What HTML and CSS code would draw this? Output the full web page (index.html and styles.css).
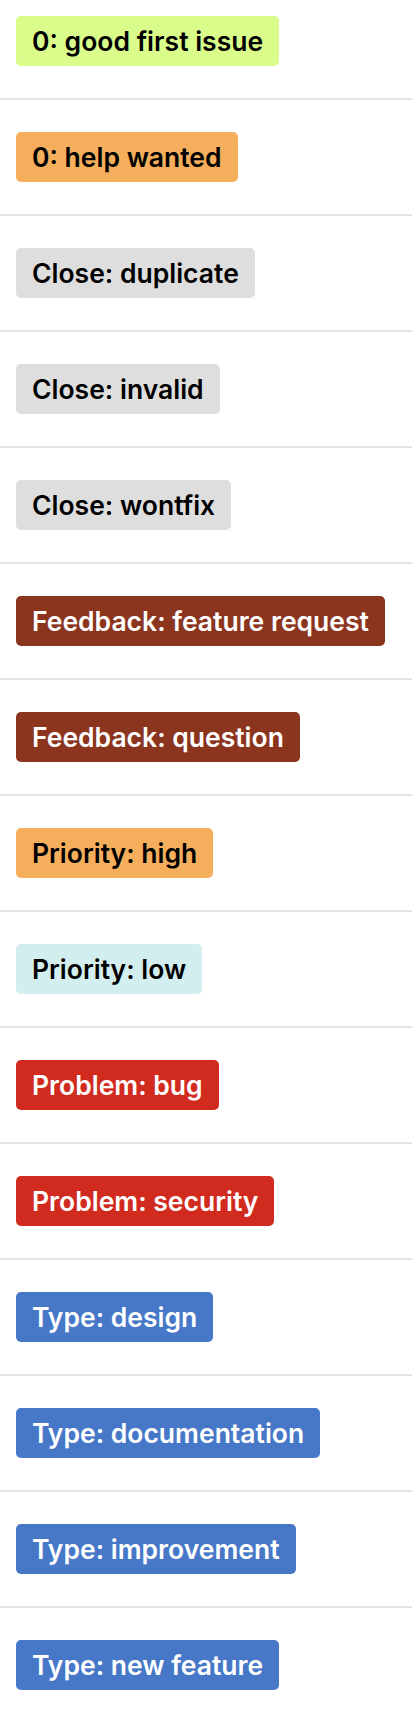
FILE: index.html
```html
<!DOCTYPE html>
<html lang="en">
<head>
<meta charset="utf-8">
<title>Labels</title>
<link rel="stylesheet" href="styles.css">
</head>
<body>
<ul class="labels">
  <li class="row"><span class="badge green">0: good first issue</span></li>
  <li class="row"><span class="badge orange">0: help wanted</span></li>
  <li class="row"><span class="badge gray">Close: duplicate</span></li>
  <li class="row"><span class="badge gray">Close: invalid</span></li>
  <li class="row"><span class="badge gray">Close: wontfix</span></li>
  <li class="row"><span class="badge brown">Feedback: feature request</span></li>
  <li class="row"><span class="badge brown">Feedback: question</span></li>
  <li class="row"><span class="badge orange">Priority: high</span></li>
  <li class="row"><span class="badge cyan">Priority: low</span></li>
  <li class="row"><span class="badge red">Problem: bug</span></li>
  <li class="row"><span class="badge red">Problem: security</span></li>
  <li class="row"><span class="badge blue">Type: design</span></li>
  <li class="row"><span class="badge blue">Type: documentation</span></li>
  <li class="row"><span class="badge blue">Type: improvement</span></li>
  <li class="row"><span class="badge blue">Type: new feature</span></li>
</ul>
</body>
</html>
```
FILE: styles.css
```css
html, body {
  margin: 0;
  padding: 0;
  background: #ffffff;
  font-family: Inter, "Noto Sans", sans-serif;
}
.labels {
  list-style: none;
  margin: 0;
  padding: 0;
}
.row {
  display: flex;
  align-items: flex-start;
  padding: 32px 16px;
  border-bottom: 2px solid #e4e3e9;
}
.row:first-child {
  padding-top: 16px;
}
.badge {
  display: inline-block;
  padding: 12px 16px;
  line-height: 26px;
  font-size: 26.5px;
  font-weight: 600;
  border-radius: 5px;
  color: #000000;
}
.green { background: #d9fc8a; }
.orange { background: #f4ae5c; }
.gray { background: #dedede; }
.brown { background: #8b341e; color: #ffffff; }
.cyan { background: #d3eeee; }
.red { background: #d12b20; color: #ffffff; }
.blue { background: #4678c7; color: #ffffff; }
```
